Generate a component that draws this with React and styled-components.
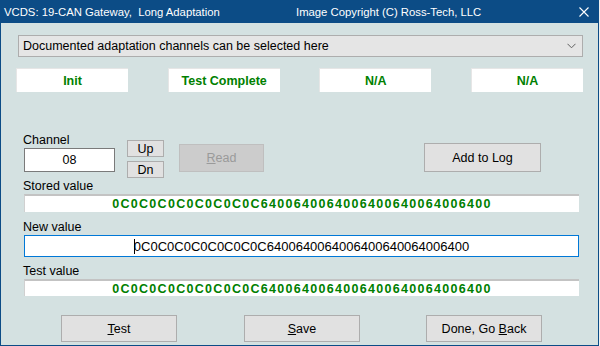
import styled, { createGlobalStyle } from "styled-components";

const GlobalStyle = createGlobalStyle`
  body {
    margin: 0;
    background: #f0f0f0;
    font-family: "Liberation Sans", Arial, sans-serif;
    font-size: 12px;
    color: #000;
  }
`;

const Window = styled.div`
  width: 599px;
  height: 346px;
  box-sizing: border-box;
  border: 1px solid #0c4c86;
  border-top: none;
  background: #d4e1e1;
  display: flex;
  flex-direction: column;
`;

const TitleBar = styled.div`
  height: 23px;
  flex-shrink: 0;
  margin: 0 -1px;
  background: #0c4c86;
  color: #fff;
  display: grid;
  grid-template-columns: 292px 1fr auto;
  align-items: center;
  padding-left: 4px;
  font-size: 11.3px;
`;

const CloseIcon = styled.svg`
  width: 10px;
  height: 10px;
  margin-right: 10px;
`;

const Body = styled.div`
  padding: 12px 15px 0 15px;
  display: flex;
  flex-direction: column;
`;

const Select = styled.div`
  height: 22px;
  box-sizing: border-box;
  margin-left: 2px;
  border: 1px solid #adadad;
  background: #e5e5e5;
  display: flex;
  align-items: center;
  justify-content: space-between;
  padding: 0 6px 0 4px;
  font-size: 12.5px;
`;

const StatusRow = styled.div`
  margin-top: 11px;
  display: flex;
  justify-content: space-between;
`;

const StatusBox = styled.div`
  width: 112px;
  height: 24px;
  box-sizing: border-box;
  background: #fff;
  border-top: 1px solid #e6e6e6;
  border-left: 1px solid #e6e6e6;
  display: flex;
  align-items: center;
  justify-content: center;
  color: #008000;
  font-weight: bold;
  font-size: 12.5px;
`;

const ControlRow = styled.div`
  margin-top: 40px;
  display: flex;
  align-items: flex-start;
  height: 46px;
`;

const ChannelCol = styled.div`
  margin-left: 7px;
  display: flex;
  flex-direction: column;
`;

const Label = styled.div`
  line-height: 16px;
  height: 16px;
  font-size: 12.5px;
  margin-left: ${(p) => p.$indent ?? 7}px;
  margin-top: ${(p) => p.$top ?? 0}px;
`;

const ChannelInput = styled.div`
  width: 91px;
  height: 24px;
  box-sizing: border-box;
  margin-left: 1px;
  background: #fff;
  border: 1px solid #7a7a7a;
  display: flex;
  align-items: center;
  justify-content: center;
  font-size: 12.5px;
`;

const StepCol = styled.div`
  margin-left: 12px;
  margin-top: 8px;
  display: flex;
  flex-direction: column;
  gap: 4px;
`;

const Button = styled.div`
  box-sizing: border-box;
  width: ${(p) => p.$w}px;
  height: ${(p) => p.$h}px;
  margin-left: ${(p) => p.$left ?? 0}px;
  margin-top: ${(p) => p.$top ?? 0}px;
  background: ${(p) => (p.$disabled ? "#cccccc" : "#e1e1e1")};
  border: 1px solid ${(p) => (p.$disabled ? "#bfbfbf" : "#adadad")};
  color: ${(p) => (p.$disabled ? "#9a9a9a" : "#000")};
  display: flex;
  align-items: center;
  justify-content: center;
  font-size: 12.5px;

  u {
    text-underline-offset: 1px;
  }
`;

const ValueBox = styled.div`
  margin-left: 8px;
  width: 555px;
  height: ${(p) => p.$h}px;
  box-sizing: border-box;
  background: #fff;
  border-top: 2px solid #c3c3c3;
  border-left: 1px solid #d0d0d0;
  display: flex;
  align-items: center;
  justify-content: center;
  color: #008000;
  font-weight: bold;
  font-size: 12.5px;
  letter-spacing: 1.3px;
`;

const EditBox = styled.div`
  margin-left: 8px;
  width: 555px;
  height: 22px;
  box-sizing: border-box;
  background: #fff;
  border: 1px solid #0078d7;
  display: flex;
  align-items: center;
  justify-content: center;
  font-size: 13px;
`;

const Caret = styled.span`
  width: 1px;
  height: 15px;
  background: #000;
  margin-right: -1px;
`;

const ButtonRow = styled.div`
  margin-top: 19px;
  display: flex;
`;

const hex = "0C0C0C0C0C0C0C0C6400640064006400640064006400";

export default function App() {
  return (
    <>
      <GlobalStyle />
      <Window>
        <TitleBar>
          <span>VCDS: 19-CAN Gateway,&nbsp; Long Adaptation</span>
          <span>Image Copyright (C) Ross-Tech, LLC</span>
          <CloseIcon viewBox="0 0 10 10">
            <path d="M0.5 0.5 L9.5 9.5 M9.5 0.5 L0.5 9.5" stroke="#fff" strokeWidth="1.1" />
          </CloseIcon>
        </TitleBar>
        <Body>
          <Select>
            <span>Documented adaptation channels can be selected here</span>
            <svg width="9" height="6" viewBox="0 0 9 6">
              <path d="M0.5 0.8 L4.5 4.8 L8.5 0.8" fill="none" stroke="#606060" strokeWidth="1" />
            </svg>
          </Select>

          <StatusRow>
            <StatusBox>Init</StatusBox>
            <StatusBox>Test Complete</StatusBox>
            <StatusBox>N/A</StatusBox>
            <StatusBox>N/A</StatusBox>
          </StatusRow>

          <ControlRow>
            <ChannelCol>
              <Label $indent={0}>Channel</Label>
              <ChannelInput>08</ChannelInput>
            </ChannelCol>
            <StepCol>
              <Button $w={37} $h={17}>Up</Button>
              <Button $w={37} $h={17}>Dn</Button>
            </StepCol>
            <Button $w={85} $h={28} $left={15} $top={12} $disabled>
              <span><u>R</u>ead</span>
            </Button>
            <Button $w={117} $h={29} $left={160} $top={11}>Add to Log</Button>
          </ControlRow>

          <Label>Stored value</Label>
          <ValueBox $h={18}>{hex}</ValueBox>

          <Label $top={7}>New value</Label>
          <EditBox>
            <Caret />
            <span>{hex}</span>
          </EditBox>

          <Label $top={6}>Test value</Label>
          <ValueBox $h={17}>{hex}</ValueBox>

          <ButtonRow>
            <Button $w={116} $h={27} $left={45}>
              <span><u>T</u>est</span>
            </Button>
            <Button $w={116} $h={27} $left={67}>
              <span><u>S</u>ave</span>
            </Button>
            <Button $w={116} $h={27} $left={66}>
              <span>Done, Go <u>B</u>ack</span>
            </Button>
          </ButtonRow>
        </Body>
      </Window>
    </>
  );
}
